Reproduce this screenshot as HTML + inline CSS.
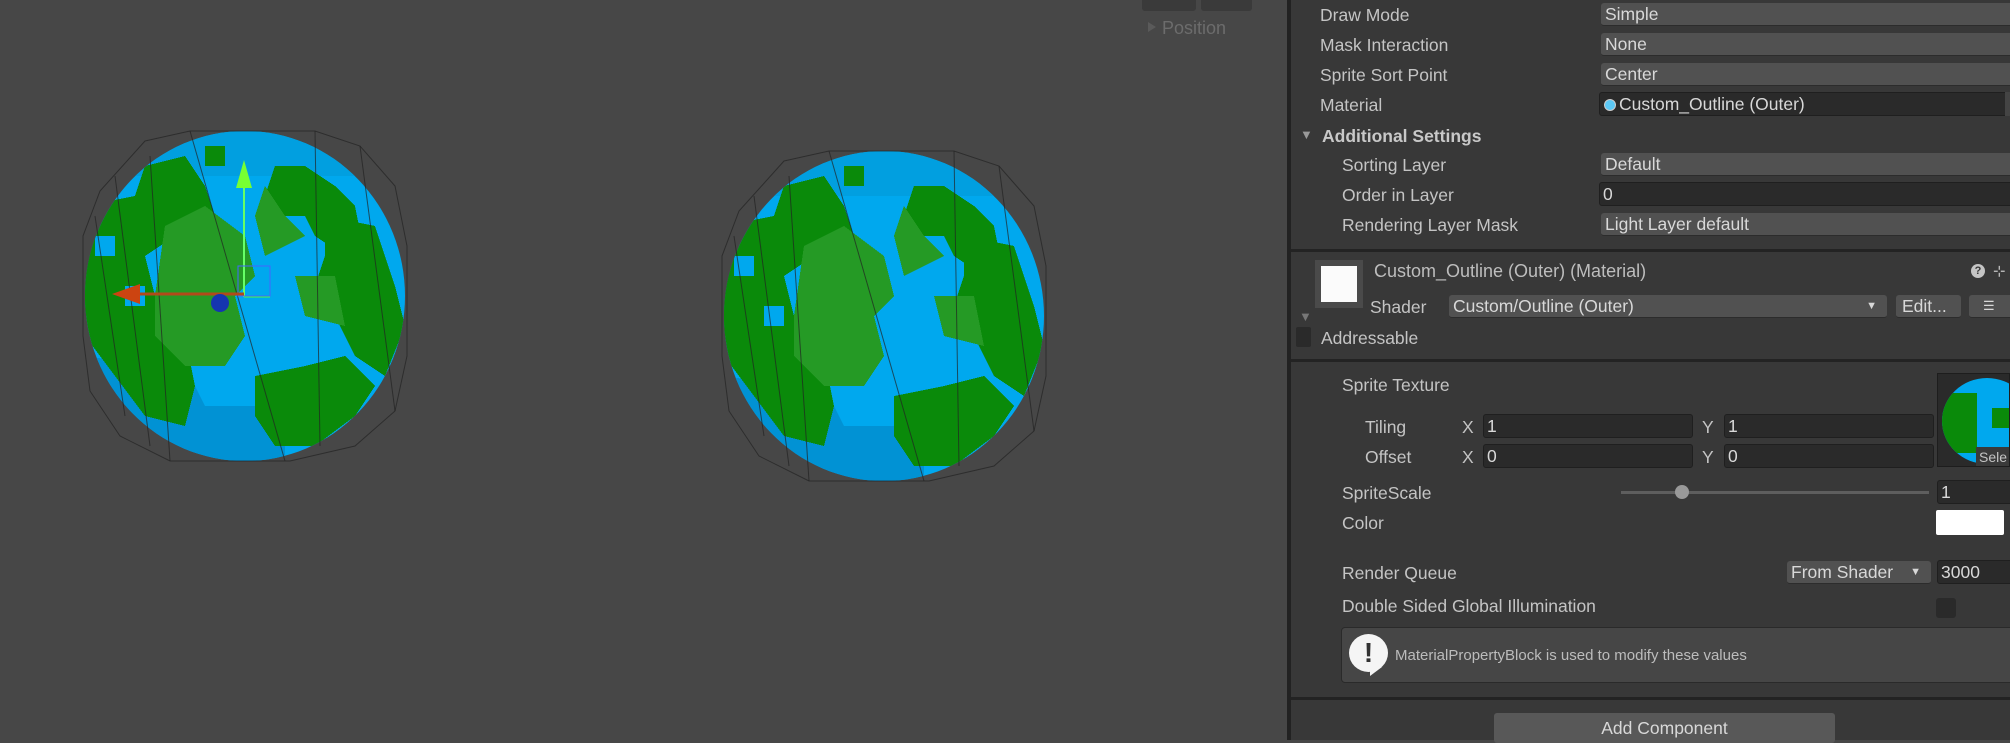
<!DOCTYPE html>
<html><head><meta charset="utf-8"><style>
*{margin:0;padding:0;box-sizing:border-box}
body{width:2010px;height:740px;background:#474747;overflow:hidden;position:relative;font-family:"Liberation Sans",sans-serif;font-size:17.5px;color:#c4c4c4}
.a{position:absolute;white-space:nowrap}
#panel{position:absolute;left:1291px;top:0;width:719px;height:740px;background:#383838}
#bord{position:absolute;left:1287px;top:0;width:4px;height:740px;background:#222}
.lab{position:absolute;line-height:22px}
.dd{position:absolute;height:23px;background:#515151;border-radius:3px;border-bottom:1px solid #2c2c2c;padding-left:4px;line-height:22px;color:#d8d8d8}
.fd{position:absolute;height:24px;background:#2a2a2a;border-radius:3px;border:1px solid #1f1f1f;padding-left:3px;line-height:22px;color:#d8d8d8}
.sep{position:absolute;left:1291px;width:719px;height:3px;background:#232323}
</style></head><body>
<svg class="a" style="left:0;top:0" width="1287" height="740">
<defs>
<g id="globe">
<clipPath id="cc"><ellipse cx="0" cy="0" rx="160" ry="165"/></clipPath>
<g clip-path="url(#cc)" shape-rendering="crispEdges">
<rect x="-170" y="-170" width="340" height="340" fill="#00a8ee"/>
<rect x="-170" y="-170" width="340" height="50" fill="#019fe0"/>
<polygon points="-170,60 -60,70 -40,110 40,110 40,170 -170,170" fill="#0192d4"/>
<polygon points="-160,-90 -110,-100 -100,-130 -60,-140 -40,-110 -30,-80 -70,-60 -100,-40 -90,0 -60,40 -50,90 -60,130 -100,120 -130,80 -160,40" fill="#0a8a0a"/>
<polygon points="-170,-60 -150,-60 -150,20 -170,20" fill="#0a8a0a"/>
<polygon points="-80,-70 -40,-90 0,-60 10,-20 -10,0 0,40 -20,70 -60,70 -90,40 -90,0" fill="#259a25"/>
<polygon points="30,-130 60,-130 90,-110 110,-90 120,-40 100,-40 70,-60 60,-80 40,-80 20,-100" fill="#0a8a0a"/>
<polygon points="20,-110 40,-80 60,-60 20,-40 10,-80" fill="#259a25"/>
<polygon points="80,-80 130,-70 150,-10 160,30 140,80 110,60 90,20 70,-10 80,-40" fill="#0a8a0a"/>
<polygon points="50,-20 90,-20 100,30 60,20" fill="#259a25"/>
<polygon points="10,80 60,70 100,60 130,90 110,120 70,150 30,150 10,120" fill="#0a8a0a"/>
<polygon points="-40,-150 -20,-150 -20,-130 -40,-130" fill="#0a8a0a"/>
<polygon points="-150,-60 -130,-60 -130,-40 -150,-40" fill="#00a8ee"/>
<polygon points="-120,-10 -100,-10 -100,10 -120,10" fill="#00a8ee"/>
</g>
<g fill="none" stroke="#222" stroke-opacity=".7" stroke-width="1">
<polygon points="-100,-155 -55,-165 70,-165 115,-150 150,-110 162,-50 162,60 150,115 110,150 45,165 -75,165 -125,140 -155,95 -162,40 -162,-60 -145,-105"/>
<line x1="-55" y1="-165" x2="40" y2="165"/><line x1="-130" y1="-120" x2="-95" y2="150"/>
<line x1="-95" y1="-140" x2="-75" y2="165"/><line x1="115" y1="-150" x2="150" y2="115"/>
<line x1="70" y1="-165" x2="75" y2="150"/><line x1="-150" y1="-80" x2="-120" y2="120"/>
</g>
</g>
</defs>
<use href="#globe" transform="translate(245,296)"/>
<use href="#globe" transform="translate(884,316)"/>
<rect x="1142" y="-4" width="54" height="15" rx="3" fill="#3a3a3a"/>
<rect x="1201" y="-4" width="51" height="15" rx="3" fill="#3a3a3a"/>
<polygon points="1148,22 1156,27 1148,32" fill="#5a5a5a"/>
<text x="1162" y="34" font-size="18" fill="#6c6c6c" font-family="Liberation Sans">Position</text>
<line x1="244" y1="297" x2="244" y2="180" stroke="#6f6" stroke-width="2"/>
<polygon points="244,160 236,188 252,188" fill="#7f3"/>
<rect x="238" y="266" width="32" height="30" fill="none" stroke="#46f" stroke-width="1"/>
<line x1="244" y1="294" x2="130" y2="294" stroke="#b24a1a" stroke-width="3"/>
<polygon points="112,294 140,284 140,304" fill="#c41"/>
<line x1="244" y1="297" x2="270" y2="297" stroke="#4f4" stroke-width="1"/>
<circle cx="220" cy="303" r="9" fill="#1535b0"/>
</svg>
<div id="bord"></div>
<div id="panel"></div>
<div class="lab a" style="left:1320px;top:4px">Draw Mode</div>
<div class="dd" style="left:1601px;top:3px;width:420px">Simple</div>
<div class="lab a" style="left:1320px;top:34px">Mask Interaction</div>
<div class="dd" style="left:1601px;top:33px;width:420px">None</div>
<div class="lab a" style="left:1320px;top:64px">Sprite Sort Point</div>
<div class="dd" style="left:1601px;top:63px;width:420px">Center</div>
<div class="lab a" style="left:1320px;top:94px">Material</div>
<div class="fd" style="left:1599px;top:92px;width:410px;padding-left:19px">Custom_Outline (Outer)</div>
<div class="a" style="left:1604px;top:99px;width:12px;height:12px;border-radius:50%;background:#5cc8f5;border:1px solid #ccc"></div>
<div class="a" style="left:2005px;top:92px;width:5px;height:24px;background:#444"></div>
<div class="a" style="left:1300px;top:127px;font-size:13px;color:#999">▼</div>
<div class="lab a" style="left:1322px;top:125px;font-weight:bold;color:#c8c8c8">Additional Settings</div>
<div class="lab a" style="left:1342px;top:154px">Sorting Layer</div>
<div class="dd" style="left:1601px;top:153px;width:420px">Default</div>
<div class="lab a" style="left:1342px;top:184px">Order in Layer</div>
<div class="fd" style="left:1599px;top:182px;width:420px">0</div>
<div class="lab a" style="left:1342px;top:214px">Rendering Layer Mask</div>
<div class="dd" style="left:1601px;top:213px;width:420px">Light Layer default</div>
<div class="sep" style="top:249px"></div>
<div class="a" style="left:1315px;top:260px;width:48px;height:48px;background:#4a4a4a"></div>
<div class="a" style="left:1321px;top:266px;width:36px;height:36px;background:#fbfbfb"></div>
<div class="lab a" style="left:1374px;top:260px;font-size:18px;color:#bdbdbd">Custom_Outline (Outer) (Material)</div>
<div class="a" style="left:1971px;top:264px;width:14px;height:14px;border-radius:50%;background:#c4c4c4;color:#383838;font-size:11px;font-weight:bold;text-align:center;line-height:14px">?</div>
<div class="a" style="left:1993px;top:262px;font-size:15px">⊹</div>
<div class="lab a" style="left:1370px;top:296px">Shader</div>
<div class="dd" style="left:1449px;top:295px;width:438px">Custom/Outline (Outer)<span style="position:absolute;right:10px;font-size:11px">▼</span></div>
<div class="dd" style="left:1896px;top:295px;width:65px;padding-left:6px">Edit...</div>
<div class="dd" style="left:1969px;top:295px;width:50px;padding-left:14px;font-size:13px">☰</div>
<div class="a" style="left:1299px;top:309px;font-size:13px;color:#777">▼</div>
<div class="a" style="left:1296px;top:327px;width:15px;height:20px;background:#2a2a2a;border-radius:2px"></div>
<div class="lab a" style="left:1321px;top:327px">Addressable</div>
<div class="sep" style="top:359px"></div>
<div class="lab a" style="left:1342px;top:374px">Sprite Texture</div>
<div class="lab a" style="left:1365px;top:416px">Tiling</div>
<div class="lab a" style="left:1462px;top:416px">X</div>
<div class="fd" style="left:1483px;top:414px;width:210px">1</div>
<div class="lab a" style="left:1702px;top:416px">Y</div>
<div class="fd" style="left:1724px;top:414px;width:210px">1</div>
<div class="lab a" style="left:1365px;top:446px">Offset</div>
<div class="lab a" style="left:1462px;top:446px">X</div>
<div class="fd" style="left:1483px;top:444px;width:210px">0</div>
<div class="lab a" style="left:1702px;top:446px">Y</div>
<div class="fd" style="left:1724px;top:444px;width:210px">0</div>
<div class="a" style="left:1937px;top:373px;width:73px;height:94px;background:#2a2a2a;border:1px solid #1d1d1d;overflow:hidden">
<div style="position:absolute;left:4px;top:4px;width:90px;height:86px;border-radius:50%;background:#00a8ee;overflow:hidden"><div style="position:absolute;left:0;top:15px;width:35px;height:60px;background:#0a8a0a"></div><div style="position:absolute;left:50px;top:30px;width:20px;height:20px;background:#0a8a0a"></div></div>
<div style="position:absolute;left:38px;top:73px;width:40px;height:20px;background:#3a3a3a;font-size:14px;padding-left:3px;line-height:20px">Sele</div></div>
<div class="lab a" style="left:1342px;top:482px">SpriteScale</div>
<div class="a" style="left:1621px;top:491px;width:308px;height:3px;background:#5e5e5e"></div>
<div class="a" style="left:1675px;top:485px;width:14px;height:14px;border-radius:50%;background:#999"></div>
<div class="fd" style="left:1937px;top:480px;width:80px">1</div>
<div class="lab a" style="left:1342px;top:512px">Color</div>
<div class="a" style="left:1936px;top:510px;width:68px;height:25px;background:#fff;border-radius:2px"></div>
<div class="lab a" style="left:1342px;top:562px">Render Queue</div>
<div class="dd" style="left:1787px;top:561px;width:144px">From Shader<span style="position:absolute;right:10px;font-size:11px">▼</span></div>
<div class="fd" style="left:1937px;top:560px;width:80px">3000</div>
<div class="lab a" style="left:1342px;top:595px">Double Sided Global Illumination</div>
<div class="a" style="left:1936px;top:598px;width:20px;height:20px;background:#2a2a2a;border-radius:3px"></div>
<div class="a" style="left:1341px;top:627px;width:680px;height:56px;background:#464646;border:1px solid #2a2a2a;border-radius:4px"></div>
<div class="a" style="left:1349px;top:634px;width:39px;height:38px;border-radius:50%;background:#f5f5f5;color:#333;font-weight:bold;font-size:28px;text-align:center;line-height:38px">!</div>
<div class="a" style="left:1370px;top:667px;width:0;height:0;border-left:12px solid #f5f5f5;border-bottom:9px solid transparent"></div>
<div class="lab a" style="left:1395px;top:645px;font-size:15px;color:#bcbcbc">MaterialPropertyBlock is used to modify these values</div>
<div class="sep" style="top:697px"></div>
<div class="a" style="left:1494px;top:713px;width:341px;height:30px;background:#585858;border-radius:3px;text-align:center;line-height:30px;color:#d8d8d8">Add Component</div>
</body></html>
